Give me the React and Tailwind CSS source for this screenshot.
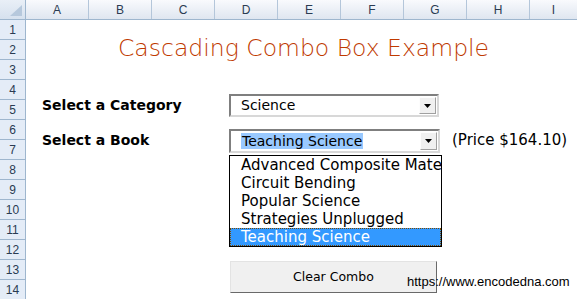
import React from "react";

const cols = ["A", "B", "C", "D", "E", "F", "G", "H", "I"];
const rows = Array.from({ length: 14 }, (_, i) => i + 1);
const books = [
  "Advanced Composite Materials",
  "Circuit Bending",
  "Popular Science",
  "Strategies Unplugged",
  "Teaching Science",
];

const DropButton = ({ className }) => (
  <div
    className={`flex items-center justify-center bg-[#f0f0f0] border border-t-[#fdfdfd] border-l-[#fdfdfd] border-b-[#a0a0a0] border-r-[#a0a0a0] ${className}`}
  >
    <svg width="7" height="4" viewBox="0 0 7 4">
      <path d="M0 0h7L3.5 4z" fill="#000" />
    </svg>
  </div>
);

const App = () => {
  return (
    <div
      className="w-[577px] h-[299px] overflow-hidden bg-white"
      style={{ fontFamily: '"DejaVu Sans", Verdana, sans-serif' }}
    >
      {/* Column headers */}
      <div className="flex h-[20px] border-b border-[#9eb6ce] bg-gradient-to-b from-[#f9fafd] to-[#dfe6f0]">
        <div className="w-[26px] shrink-0 border-r border-[#9eb6ce] bg-gradient-to-b from-[#e9eff7] to-[#d6e1ee] flex items-end justify-end pr-[3px] pb-[3px]">
          <svg width="12" height="11" viewBox="0 0 12 11">
            <path d="M12 0v11H0z" fill="#b6c8dc" />
          </svg>
        </div>
        {cols.map((c, i) => (
          <div
            key={c}
            className={`${i === cols.length - 1 ? "flex-1" : "w-[63px] border-r border-[#b4c6da]"} shrink-0 flex items-center justify-center text-[12px] text-[#2a3b52]`}
            style={{ fontFamily: '"Liberation Sans", Arial, sans-serif' }}
          >
            {c}
          </div>
        ))}
      </div>

      <div className="flex">
        {/* Row headers */}
        <div className="w-[26px] shrink-0 border-r border-[#9eb6ce] bg-[#e4ecf7]">
          {rows.map((r) => (
            <div
              key={r}
              className="h-[20px] border-b border-[#9eb6ce] flex items-center justify-center text-[12px] text-[#2a3b52]"
              style={{ fontFamily: '"Liberation Sans", Arial, sans-serif' }}
            >
              {r}
            </div>
          ))}
        </div>

        {/* Sheet content */}
        <div className="flex-1 flex flex-col">
          <div className="mt-[14px] h-[28px] pl-[4px] text-center text-[23.5px] leading-[28px] font-extralight text-[#c03a00]">
            Cascading Combo Box Example
          </div>

          <div className="mt-[32px] flex items-center h-[23px]">
            <div className="w-[203px] pl-[16px] font-bold text-[14px] text-black">
              Select a Category
            </div>
            <div className="w-[210px] h-[23px] flex items-center border-2 border-t-[#7f7f7f] border-l-[#7f7f7f] border-b-[#d8d8d8] border-r-[#d8d8d8] bg-white">
              <span className="flex-1 pl-[10px] text-[14px] text-black">Science</span>
              <DropButton className="w-[17px] h-[17px] mr-[1px]" />
            </div>
          </div>

          <div className="mt-[12px] flex items-start relative">
            <div className="w-[203px] pl-[16px] pt-[1px] font-bold text-[14px] text-black">
              Select a Book
            </div>
            <div className="w-[211px] h-[24px] flex items-center border-2 border-t-[#7f7f7f] border-l-[#7f7f7f] border-b-[#d8d8d8] border-r-[#d8d8d8] bg-white">
              <span className="flex-1 pl-[10px]">
                <span className="bg-[#99c9ff] text-[14px] text-black px-[1px]">Teaching Science</span>
              </span>
              <DropButton className="w-[17px] h-[18px] mr-[1px]" />
            </div>
            <div className="ml-[12px] text-[15px] text-black">(Price $164.10)</div>

            {/* Dropdown list */}
            <div className="absolute left-[203px] top-[26px] w-[213px] h-[92px] border border-black bg-white overflow-hidden">
              {books.map((b, i) => (
                <div
                  key={b}
                  className={`h-[18px] leading-[18px] pl-[11px] whitespace-nowrap text-[15px] ${
                    i === books.length - 1
                      ? "bg-[#3399ff] text-white outline-1 outline-dotted outline-[#7a4a00] -outline-offset-1"
                      : "text-black"
                  }`}
                >
                  {b}
                </div>
              ))}
            </div>
          </div>

          <div className="mt-[108px] ml-[204px] relative w-[207px] h-[32px] bg-[#f0f0f0] border border-t-[#e3e3e3] border-l-[#e3e3e3] border-b-[#696969] border-r-[#696969] flex items-center">
            <span className="pl-[62px] text-[12.5px] text-black">Clear Combo</span>
            <span
              className="absolute left-[176px] top-[10px] whitespace-nowrap text-[13px] text-black"
              style={{ fontFamily: '"Liberation Sans", Arial, sans-serif' }}
            >
              https://www.encodedna.com
            </span>
          </div>
        </div>
      </div>
    </div>
  );
};

export default App;
